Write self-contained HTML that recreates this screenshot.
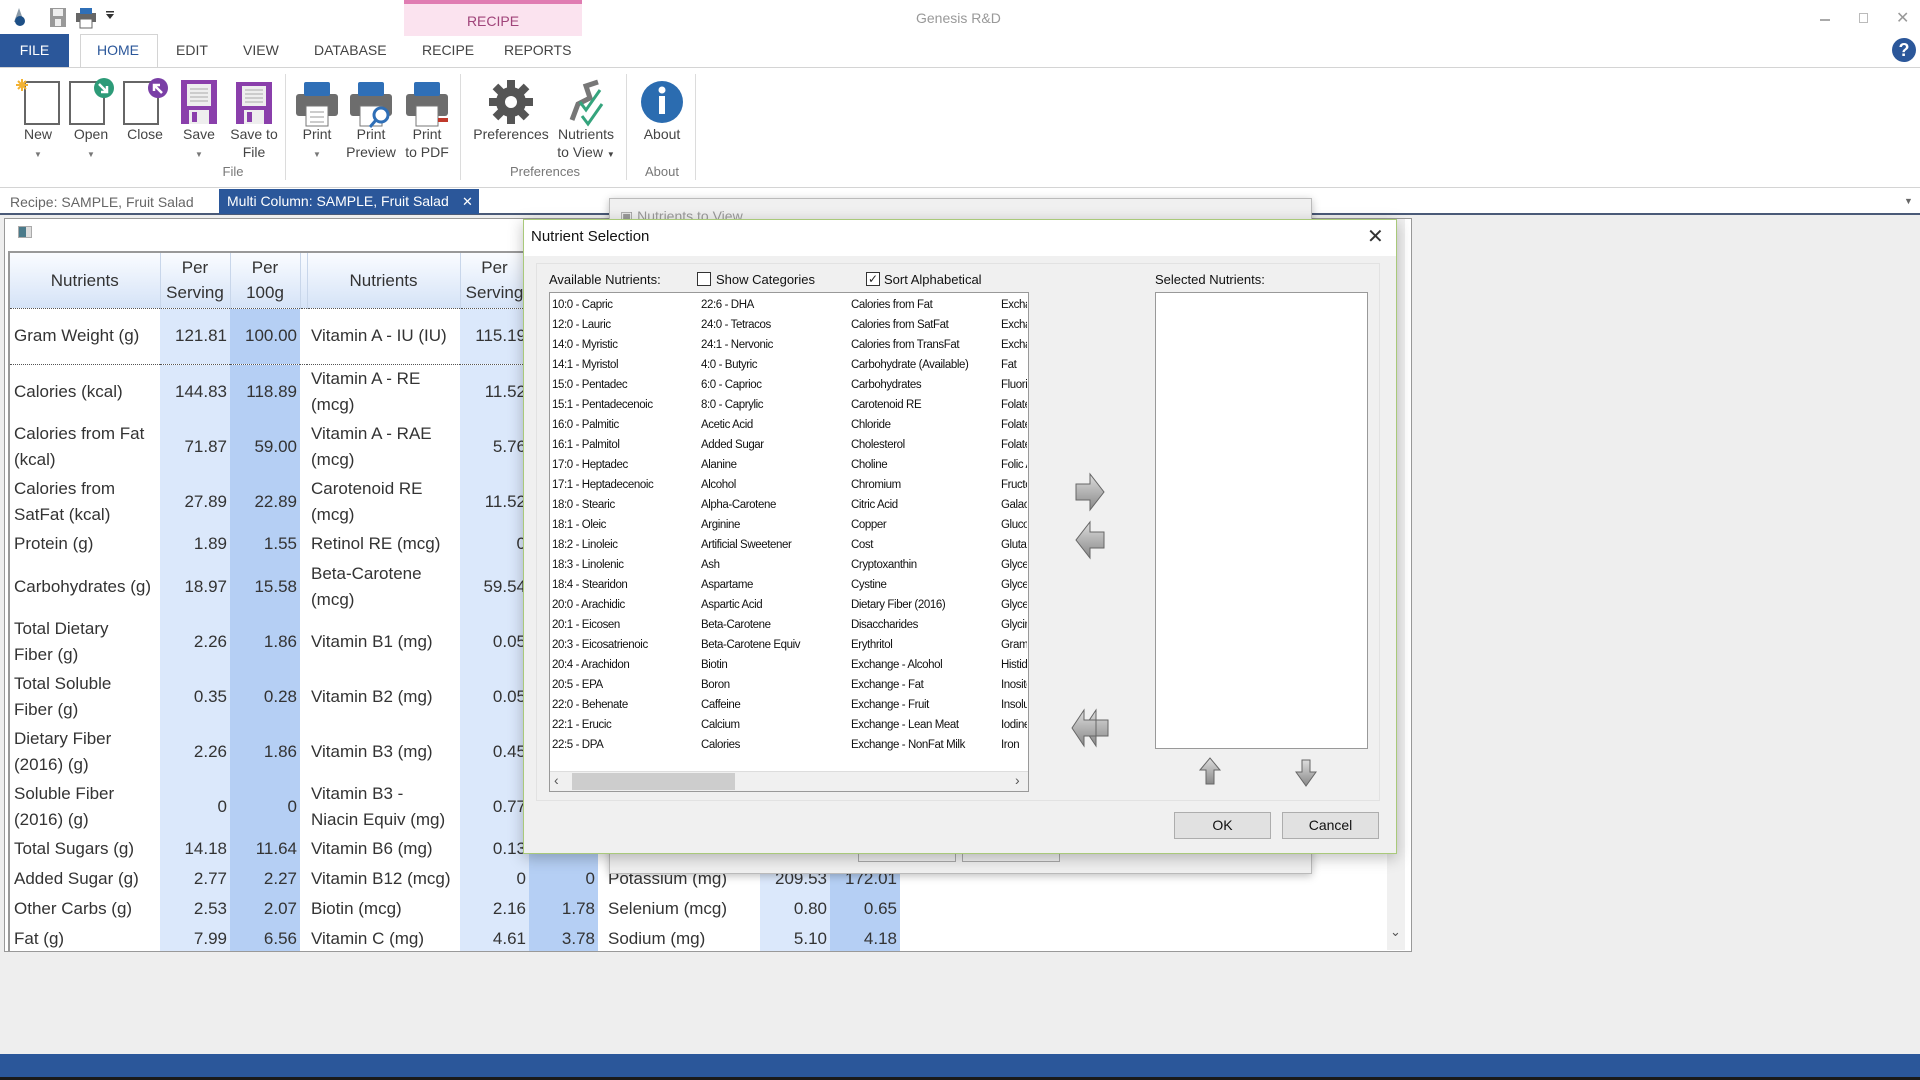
<!DOCTYPE html>
<html><head><meta charset="utf-8"><style>
*{box-sizing:border-box;margin:0;padding:0}
body{width:1920px;height:1080px;position:relative;overflow:hidden;background:#eeeeee;font-family:"Liberation Sans",sans-serif;color:#222}
.a{position:absolute}
.tab{position:absolute;top:42px;font-size:14px;color:#444}
.lbl{position:absolute;font-size:14px;color:#444;text-align:center;line-height:18px;transform:translateX(-50%);white-space:nowrap}
.dd{position:absolute;font-size:8px;color:#777;transform:translateX(-50%)}
.grp{position:absolute;top:164px;font-size:13px;color:#777;transform:translateX(-50%)}
.sep{position:absolute;top:74px;width:1px;height:106px;background:#dcdcdc}
table{border-collapse:collapse;table-layout:fixed}
td{font-size:17px;color:#333;padding:0 4px;line-height:26px;white-space:nowrap;overflow:hidden}
td.n{text-align:right;padding-right:3px}
.c1{background:#dbe8fb}.c2{background:#b5cff4}
th{font-weight:normal;font-size:17px;color:#333;line-height:25px;background:linear-gradient(#fafcff,#d5e3f7);border-right:1px solid #c8d6ea}
.lst{position:absolute;font-size:11.5px;letter-spacing:-0.4px;color:#111;white-space:nowrap;line-height:20px}
.btn{position:absolute;background:#e1e1e1;border:1px solid #adadad;font-size:14px;text-align:center;line-height:24px;color:#111}
</style></head><body>
<div class="a" style="left:0;top:0;width:1920px;height:67px;background:#fff"></div>
<div class="a" style="left:404px;top:0;width:178px;height:36px;background:#fbe3ef;border-top:4px solid #e07cb2"></div>
<div class="a" style="left:404px;top:13px;width:178px;text-align:center;font-size:14px;color:#a0447a">RECIPE</div>
<div class="a" style="left:916px;top:10px;font-size:14px;color:#999">Genesis R&amp;D</div>
<svg class="a" style="left:8px;top:4px" width="110" height="26"><path d="M6 18 L11 4 L16 18Z" fill="#8a9aa8"/><circle cx="12" cy="17" r="5" fill="#1d4f86"/><rect x="42" y="4" width="16" height="19" fill="#999"/><rect x="45" y="5" width="10" height="7" fill="#eee"/><rect x="47" y="15" width="6" height="7" fill="#eee"/><rect x="68" y="9" width="20" height="9" fill="#666"/><rect x="72" y="4" width="12" height="6" fill="#2f6fb7"/><rect x="72" y="15" width="12" height="9" fill="#fff" stroke="#666"/><path d="M98 10h8l-4 5z" fill="#333"/><rect x="98" y="7" width="8" height="1.5" fill="#333"/></svg>
<div class="a" style="left:1820px;top:19px;width:10px;height:2px;background:#aaa"></div>
<div class="a" style="left:1859px;top:13px;width:9px;height:10px;border:1px solid #bbb"></div>
<div class="a" style="left:1896px;top:8px;font-size:16px;color:#999">✕</div>
<div class="a" style="left:1892px;top:38px;width:24px;height:24px;border-radius:50%;background:#2b579a;color:#fff;font-weight:bold;font-size:18px;text-align:center;line-height:24px">?</div>
<div class="a" style="left:0;top:34px;width:69px;height:33px;background:#2b579a;color:#fff;font-size:14px;text-align:center;line-height:33px">FILE</div>
<div class="a" style="left:80px;top:34px;width:78px;height:34px;background:#fff;border:1px solid #d4d4d4;border-bottom:none"></div>
<div class="tab" style="left:97px;color:#2b579a">HOME</div>
<div class="tab" style="left:176px">EDIT</div>
<div class="tab" style="left:243px">VIEW</div>
<div class="tab" style="left:314px">DATABASE</div>
<div class="tab" style="left:422px">RECIPE</div>
<div class="tab" style="left:504px">REPORTS</div>
<div class="a" style="left:0;top:67px;width:1920px;height:121px;background:#fff;border-top:1px solid #d4d4d4;border-bottom:1px solid #d4d4d4"></div>
<svg class="a" style="left:0;top:76px" width="700" height="60">
<g fill="none" stroke="#666" stroke-width="2"><rect x="25" y="6" width="34" height="42"/><rect x="70" y="6" width="34" height="42"/><rect x="124" y="6" width="34" height="42"/></g>
<g stroke="#f2b233" stroke-width="2"><path d="M22 3v12M16 9h12M18 5l8 8M26 5l-8 8"/></g>
<circle cx="104" cy="12" r="10" fill="#2d9b78"/><path d="M99 8l8 8M107 10v6h-6" stroke="#fff" stroke-width="2.5" fill="none"/>
<circle cx="158" cy="12" r="10" fill="#7a3fa6"/><path d="M162 17l-8-8M154 15v-6h6" stroke="#fff" stroke-width="2.5" fill="none"/>
<g><rect x="181" y="4" width="36" height="44" fill="#8a3fab"/><rect x="187" y="8" width="24" height="22" fill="#eee"/><path d="M190 13h18M190 17h18M190 21h18M190 25h18" stroke="#aaa"/><rect x="189" y="34" width="20" height="14" fill="#eee"/><rect x="192" y="36" width="5" height="10" fill="#8a3fab"/></g>
<g><rect x="236" y="6" width="36" height="42" fill="#8a3fab"/><rect x="242" y="10" width="24" height="20" fill="#eee"/><path d="M245 14h18M245 18h18M245 22h18M245 26h18" stroke="#aaa"/><rect x="244" y="34" width="20" height="14" fill="#eee"/><rect x="247" y="36" width="5" height="10" fill="#8a3fab"/></g>
<g><rect x="296" y="18" width="42" height="22" rx="3" fill="#6d6d6d"/><rect x="304" y="6" width="26" height="14" rx="2" fill="#2f6fb7"/><rect x="306" y="30" width="22" height="20" fill="#fff" stroke="#777"/><path d="M310 36h14M310 41h14M310 46h14" stroke="#999"/></g>
<g><rect x="350" y="18" width="42" height="22" rx="3" fill="#6d6d6d"/><rect x="358" y="6" width="26" height="14" rx="2" fill="#2f6fb7"/><rect x="360" y="30" width="22" height="20" fill="#fff" stroke="#777"/><circle cx="381" cy="39" r="7" fill="#fff" stroke="#2f6fb7" stroke-width="3"/><path d="M376 44l-6 7" stroke="#2f6fb7" stroke-width="3"/></g>
<g><rect x="406" y="18" width="42" height="22" rx="3" fill="#6d6d6d"/><rect x="414" y="6" width="26" height="14" rx="2" fill="#2f6fb7"/><rect x="416" y="30" width="22" height="20" fill="#fff" stroke="#777"/><rect x="438" y="42" width="10" height="4" fill="#c0392b"/></g>
<g transform="translate(511,26)"><circle r="15" fill="#555"/><g fill="#555"><rect x="-4" y="-22" width="8" height="44"/><rect x="-22" y="-4" width="44" height="8"/><rect x="-4" y="-22" width="8" height="44" transform="rotate(45)"/><rect x="-4" y="-22" width="8" height="44" transform="rotate(-45)"/></g><circle r="6" fill="#fff"/></g>
<g><path d="M572 44 L578 28 L590 22 L586 10 L598 6" stroke="#777" stroke-width="5" fill="none"/><path d="M580 26l6 8 14-20M582 40l6 8 14-20" stroke="#35a47d" stroke-width="3" fill="none"/></g>
<circle cx="662" cy="26" r="21" fill="#2b6cb0"/><circle cx="662" cy="14" r="3.5" fill="#fff"/><rect x="659" y="20" width="6" height="18" fill="#fff"/>
</svg>
<div class="lbl" style="left:38px;top:125px">New</div><div class="dd" style="left:38px;top:150px">▼</div>
<div class="lbl" style="left:91px;top:125px">Open</div><div class="dd" style="left:91px;top:150px">▼</div>
<div class="lbl" style="left:145px;top:125px">Close</div>
<div class="lbl" style="left:199px;top:125px">Save</div><div class="dd" style="left:199px;top:150px">▼</div>
<div class="lbl" style="left:254px;top:125px">Save to<br>File</div>
<div class="lbl" style="left:317px;top:125px">Print</div><div class="dd" style="left:317px;top:150px">▼</div>
<div class="lbl" style="left:371px;top:125px">Print<br>Preview</div>
<div class="lbl" style="left:427px;top:125px">Print<br>to PDF</div>
<div class="lbl" style="left:511px;top:125px">Preferences</div>
<div class="lbl" style="left:586px;top:125px">Nutrients<br>to View <span style="font-size:8px">▼</span></div>
<div class="lbl" style="left:662px;top:125px">About</div>
<div class="grp" style="left:233px">File</div><div class="grp" style="left:545px">Preferences</div><div class="grp" style="left:662px">About</div>
<div class="sep" style="left:285px"></div><div class="sep" style="left:460px"></div><div class="sep" style="left:626px"></div><div class="sep" style="left:695px"></div>
<div class="a" style="left:0;top:188px;width:1920px;height:27px;background:#fff;border-bottom:2px solid #4a5a78"></div>
<div class="a" style="left:10px;top:194px;font-size:14px;color:#666">Recipe: SAMPLE, Fruit Salad</div>
<div class="a" style="left:219px;top:189px;width:260px;height:25px;background:#2b579a;color:#fff;font-size:14px;line-height:25px;padding-left:8px">Multi Column: SAMPLE, Fruit Salad<span style="position:absolute;left:243px;top:0;font-size:13px">✕</span></div>
<div class="a" style="left:1904px;top:196px;font-size:9px;color:#666">▼</div>
<div class="a" style="left:4px;top:218px;width:1408px;height:734px;background:#fff;border:1px solid #999"></div>
<div class="a" style="left:18px;top:226px;width:14px;height:12px;border:1px solid #aaa;background:linear-gradient(90deg,#4a7a8a 60%,#ddd 60%)"></div>
<div class="a" style="left:1387px;top:219px;width:18px;height:731px;background:#f0f0f0"></div>
<div class="a" style="left:1390px;top:924px;font-size:13px;color:#555">⌄</div>
<div class="a" style="left:8px;top:251px;width:1379px;height:700px;overflow:hidden;border-top:2px solid #999;border-left:2px solid #999">
<table style="width:890px">
<colgroup><col style="width:150px"><col style="width:70px"><col style="width:70px"><col style="width:7px"><col style="width:153px"><col style="width:69px"><col style="width:69px"><col style="width:6px"><col style="width:156px"><col style="width:70px"><col style="width:70px"></colgroup>
<tr style="height:55px"><th>Nutrients</th><th>Per<br>Serving</th><th>Per<br>100g</th><th></th><th>Nutrients</th><th>Per<br>Serving</th><th>Per<br>100g</th><th></th><th>Nutrients</th><th>Per<br>Serving</th><th>Per<br>100g</th></tr>
<tr style="height:56px;border-top:1px dotted #555;border-bottom:1px dotted #555"><td>Gram Weight (g)</td><td class="n c1">121.81</td><td class="n c2">100.00</td><td></td><td>Vitamin A - IU (IU)</td><td class="n c1">115.19</td><td class="n c2"></td><td></td><td></td><td class="c1"></td><td class="c2"></td></tr>
<tr style="height:55px"><td>Calories (kcal)</td><td class="n c1">144.83</td><td class="n c2">118.89</td><td></td><td>Vitamin A - RE<br>(mcg)</td><td class="n c1">11.52</td><td class="c2"></td><td></td><td></td><td class="c1"></td><td class="c2"></td></tr>
<tr style="height:55px"><td>Calories from Fat<br>(kcal)</td><td class="n c1">71.87</td><td class="n c2">59.00</td><td></td><td>Vitamin A - RAE<br>(mcg)</td><td class="n c1">5.76</td><td class="c2"></td><td></td><td></td><td class="c1"></td><td class="c2"></td></tr>
<tr style="height:55px"><td>Calories from<br>SatFat (kcal)</td><td class="n c1">27.89</td><td class="n c2">22.89</td><td></td><td>Carotenoid RE<br>(mcg)</td><td class="n c1">11.52</td><td class="c2"></td><td></td><td></td><td class="c1"></td><td class="c2"></td></tr>
<tr style="height:30px"><td>Protein (g)</td><td class="n c1">1.89</td><td class="n c2">1.55</td><td></td><td>Retinol RE (mcg)</td><td class="n c1">0</td><td class="c2"></td><td></td><td></td><td class="c1"></td><td class="c2"></td></tr>
<tr style="height:55px"><td>Carbohydrates (g)</td><td class="n c1">18.97</td><td class="n c2">15.58</td><td></td><td>Beta-Carotene<br>(mcg)</td><td class="n c1">59.54</td><td class="c2"></td><td></td><td></td><td class="c1"></td><td class="c2"></td></tr>
<tr style="height:55px"><td>Total Dietary<br>Fiber (g)</td><td class="n c1">2.26</td><td class="n c2">1.86</td><td></td><td>Vitamin B1 (mg)</td><td class="n c1">0.05</td><td class="c2"></td><td></td><td></td><td class="c1"></td><td class="c2"></td></tr>
<tr style="height:55px"><td>Total Soluble<br>Fiber (g)</td><td class="n c1">0.35</td><td class="n c2">0.28</td><td></td><td>Vitamin B2 (mg)</td><td class="n c1">0.05</td><td class="c2"></td><td></td><td></td><td class="c1"></td><td class="c2"></td></tr>
<tr style="height:55px"><td>Dietary Fiber<br>(2016) (g)</td><td class="n c1">2.26</td><td class="n c2">1.86</td><td></td><td>Vitamin B3 (mg)</td><td class="n c1">0.45</td><td class="c2"></td><td></td><td></td><td class="c1"></td><td class="c2"></td></tr>
<tr style="height:55px"><td>Soluble Fiber<br>(2016) (g)</td><td class="n c1">0</td><td class="n c2">0</td><td></td><td>Vitamin B3 -<br>Niacin Equiv (mg)</td><td class="n c1">0.77</td><td class="c2"></td><td></td><td></td><td class="c1"></td><td class="c2"></td></tr>
<tr style="height:30px"><td>Total Sugars (g)</td><td class="n c1">14.18</td><td class="n c2">11.64</td><td></td><td>Vitamin B6 (mg)</td><td class="n c1">0.13</td><td class="n c2">0.11</td><td></td><td></td><td class="c1"></td><td class="c2"></td></tr>
<tr style="height:30px"><td>Added Sugar (g)</td><td class="n c1">2.77</td><td class="n c2">2.27</td><td></td><td>Vitamin B12 (mcg)</td><td class="n c1">0</td><td class="n c2">0</td><td></td><td>Potassium (mg)</td><td class="n c1">209.53</td><td class="n c2">172.01</td></tr>
<tr style="height:30px"><td>Other Carbs (g)</td><td class="n c1">2.53</td><td class="n c2">2.07</td><td></td><td>Biotin (mcg)</td><td class="n c1">2.16</td><td class="n c2">1.78</td><td></td><td>Selenium (mcg)</td><td class="n c1">0.80</td><td class="n c2">0.65</td></tr>
<tr style="height:30px"><td>Fat (g)</td><td class="n c1">7.99</td><td class="n c2">6.56</td><td></td><td>Vitamin C (mg)</td><td class="n c1">4.61</td><td class="n c2">3.78</td><td></td><td>Sodium (mg)</td><td class="n c1">5.10</td><td class="n c2">4.18</td></tr>
</table></div>
<div class="a" style="left:609px;top:198px;width:703px;height:676px;background:#f0f0f0;border:1px solid #bbb;box-shadow:0 2px 8px rgba(0,0,0,.25)"></div>
<div class="a" style="left:620px;top:208px;font-size:14px;color:#999">▣ Nutrients to View</div>
<div class="a" style="left:858px;top:852px;width:98px;height:10px;border:1px solid #aaa;border-top:none"></div>
<div class="a" style="left:962px;top:852px;width:98px;height:10px;border:1px solid #aaa;border-top:none"></div>
<div class="a" style="left:523px;top:219px;width:874px;height:635px;background:#f0f0f0;border:1px solid #a9c97a;box-shadow:0 4px 14px rgba(0,0,0,.25)"></div>
<div class="a" style="left:524px;top:220px;width:872px;height:36px;background:#fff"></div>
<div class="a" style="left:531px;top:228px;font-size:15px;color:#111">Nutrient Selection</div>
<div class="a" style="left:1367px;top:224px;font-size:20px;color:#333">✕</div>
<div class="a" style="left:536px;top:263px;width:844px;height:538px;border:1px solid #e2e2e2;background:#f0f0f0"></div>
<div class="a" style="left:549px;top:272px;font-size:13px;color:#111">Available Nutrients:</div>
<div class="a" style="left:697px;top:272px;width:14px;height:14px;border:1px solid #333;background:#fff"></div>
<div class="a" style="left:716px;top:272px;font-size:13px;color:#111">Show Categories</div>
<div class="a" style="left:866px;top:272px;width:14px;height:14px;border:1px solid #333;background:#fff;font-size:12px;line-height:12px;text-align:center">✓</div>
<div class="a" style="left:884px;top:272px;font-size:13px;color:#111">Sort Alphabetical</div>
<div class="a" style="left:549px;top:292px;width:480px;height:500px;background:#fff;border:1px solid #999;overflow:hidden">
<div class="lst" style="left:2px;top:2px">10:0 - Capric<br>12:0 - Lauric<br>14:0 - Myristic<br>14:1 - Myristol<br>15:0 - Pentadec<br>15:1 - Pentadecenoic<br>16:0 - Palmitic<br>16:1 - Palmitol<br>17:0 - Heptadec<br>17:1 - Heptadecenoic<br>18:0 - Stearic<br>18:1 - Oleic<br>18:2 - Linoleic<br>18:3 - Linolenic<br>18:4 - Stearidon<br>20:0 - Arachidic<br>20:1 - Eicosen<br>20:3 - Eicosatrienoic<br>20:4 - Arachidon<br>20:5 - EPA<br>22:0 - Behenate<br>22:1 - Erucic<br>22:5 - DPA</div>
<div class="lst" style="left:151px;top:2px">22:6 - DHA<br>24:0 - Tetracos<br>24:1 - Nervonic<br>4:0 - Butyric<br>6:0 - Caprioc<br>8:0 - Caprylic<br>Acetic Acid<br>Added Sugar<br>Alanine<br>Alcohol<br>Alpha-Carotene<br>Arginine<br>Artificial Sweetener<br>Ash<br>Aspartame<br>Aspartic Acid<br>Beta-Carotene<br>Beta-Carotene Equiv<br>Biotin<br>Boron<br>Caffeine<br>Calcium<br>Calories</div>
<div class="lst" style="left:301px;top:2px">Calories from Fat<br>Calories from SatFat<br>Calories from TransFat<br>Carbohydrate (Available)<br>Carbohydrates<br>Carotenoid RE<br>Chloride<br>Cholesterol<br>Choline<br>Chromium<br>Citric Acid<br>Copper<br>Cost<br>Cryptoxanthin<br>Cystine<br>Dietary Fiber (2016)<br>Disaccharides<br>Erythritol<br>Exchange - Alcohol<br>Exchange - Fat<br>Exchange - Fruit<br>Exchange - Lean Meat<br>Exchange - NonFat Milk</div>
<div class="lst" style="left:451px;top:2px;width:26px;overflow:hidden">Exchange<br>Exchange<br>Exchange<br>Fat<br>Fluoride<br>Folate<br>Folate<br>Folate<br>Folic Acid<br>Fructose<br>Galactose<br>Glucose<br>Glutamic<br>Glycerol<br>Glycemic<br>Glycemic<br>Glycine<br>Gram<br>Histidine<br>Inositol<br>Insoluble<br>Iodine<br>Iron</div>
<div class="a" style="left:0;top:478px;width:478px;height:20px;background:#f0f0f0;border-top:1px solid #ddd"></div>
<div class="a" style="left:4px;top:479px;font-size:14px;color:#555">‹</div>
<div class="a" style="left:22px;top:480px;width:163px;height:17px;background:#cdcdcd"></div>
<div class="a" style="left:465px;top:479px;font-size:14px;color:#555">›</div>
</div>
<div class="a" style="left:1155px;top:272px;font-size:13px;color:#111">Selected Nutrients:</div>
<div class="a" style="left:1155px;top:292px;width:213px;height:457px;background:#fff;border:1px solid #999"></div>
<svg class="a" style="left:1070px;top:470px" width="40" height="290"><defs><linearGradient id="g" x1="0" y1="0" x2="0" y2="1"><stop offset="0" stop-color="#ddd"/><stop offset="1" stop-color="#888"/></linearGradient></defs>
<path d="M6 14h14V4l14 18-14 18V30H6z" fill="url(#g)" stroke="#666"/>
<path d="M34 62H20V52L6 70l14 18V78h14z" fill="url(#g)" stroke="#666"/>
<path d="M38 250H26V240L14 258l12 18V266h12z" fill="url(#g)" stroke="#666"/>
<path d="M26 250H14V240L2 258l12 18V266h12z" fill="url(#g)" stroke="#666"/>
</svg>
<svg class="a" style="left:1196px;top:756px" width="130" height="32"><path d="M4 14L14 2l10 12h-6v14h-8V14z" fill="url(#g)" stroke="#666"/><path d="M106 4h8v12h6l-10 14-10-14h6z" fill="url(#g)" stroke="#666"/></svg>
<div class="btn" style="left:1174px;top:812px;width:97px;height:27px">OK</div>
<div class="btn" style="left:1282px;top:812px;width:97px;height:27px">Cancel</div>
<div class="a" style="left:0;top:1054px;width:1920px;height:23px;background:#2b579a"></div>
<div class="a" style="left:0;top:1077px;width:1920px;height:3px;background:#1a1a1a"></div>
</body></html>
